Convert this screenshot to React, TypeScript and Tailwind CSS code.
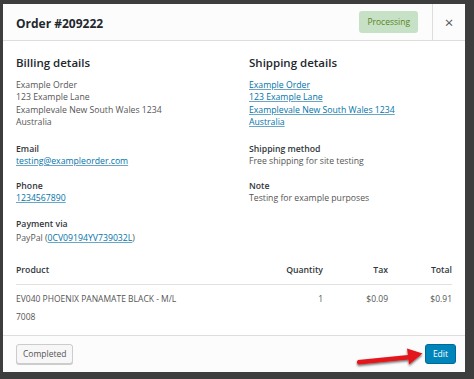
import React from 'react'

const font = { fontFamily: '"Open Sans", "Noto Sans", sans-serif' }

type Line = { readonly text: string; readonly link?: boolean }

const Label = ({ children }: { children: React.ReactNode }): JSX.Element => (
  <div className="text-[8.7px] leading-[12px] font-semibold text-[#32373c]">{children}</div>
)

const Value = ({ children }: { children: React.ReactNode }): JSX.Element => (
  <div className="text-[8.7px] leading-[12px] text-[#555]">{children}</div>
)

const Link = ({ children }: { children: React.ReactNode }): JSX.Element => (
  <span className="text-[#0073aa] underline decoration-[#6aa6c8] underline-offset-1">{children}</span>
)

const Address = ({ lines }: { lines: ReadonlyArray<Line> }): JSX.Element => (
  <div className="mt-[8px] flex flex-col text-[8.7px] leading-[12.3px] text-[#555]">
    {lines.map(l => (
      <span key={l.text}>{l.link ? <Link>{l.text}</Link> : l.text}</span>
    ))}
  </div>
)

const billing: ReadonlyArray<Line> = [
  { text: 'Example Order' },
  { text: '123 Example Lane' },
  { text: 'Examplevale New South Wales 1234' },
  { text: 'Australia' },
]

const shipping: ReadonlyArray<Line> = billing.map(l => ({ ...l, link: true }))

const Arrow = (): JSX.Element => (
  <svg className="absolute left-[352px] top-[345px]" width="74" height="24" viewBox="0 0 74 24">
    <defs>
      <filter id="sh" x="-20%" y="-50%" width="140%" height="200%">
        <feDropShadow dx="0" dy="1.5" stdDeviation="1" floodColor="#000" floodOpacity="0.6" />
      </filter>
    </defs>
    <path
      d="M6 15 L56 10 L55 3.5 L70.5 8.5 L57 19.5 L56.5 14.5 L6.5 19.5 Q3.5 17.5 6 15 Z"
      fill="#e3141b"
      filter="url(#sh)"
    />
  </svg>
)

export default function App(): JSX.Element {
  return (
    <div className="relative h-[379px] w-[474px] overflow-hidden bg-[#3d3d3d] pl-[3px] pt-[4px]" style={font}>
      <div className="flex h-[368px] w-[462px] flex-col bg-white">
        <div className="flex h-[37px] shrink-0 items-center border-b border-[#dddddd] bg-[#fcfcfc]">
          <h1 className="pl-[13px] pt-[3px] text-[12px] font-bold text-[#23282d]">Order #209222</h1>
          <span className="ml-auto mr-[14px] rounded-[3px] bg-[#c6e1c6] px-[8px] py-[5px] text-[8.5px] leading-[12px] text-[#5b841b]">
            Processing
          </span>
          <div className="flex h-full w-[33px] items-center justify-center border-l border-[#dddddd] text-[15px] text-[#555]">
            ×
          </div>
        </div>

        <div className="grid grid-cols-[233px_1fr] px-[13px] pt-[13px]">
          <div className="flex flex-col">
            <h2 className="text-[11.5px] leading-[17px] font-semibold text-[#23282d]">Billing details</h2>
            <Address lines={billing} />
            <div className="mt-[15px]">
              <Label>Email</Label>
              <Value>
                <Link>testing@exampleorder.com</Link>
              </Value>
            </div>
            <div className="mt-[13px]">
              <Label>Phone</Label>
              <Value>
                <Link>1234567890</Link>
              </Value>
            </div>
            <div className="mt-[14px]">
              <Label>Payment via</Label>
              <div className="mt-[2px]">
                <Value>
                  PayPal (<Link>0CV09194YV739032L</Link>)
                </Value>
              </div>
            </div>
          </div>
          <div className="flex flex-col">
            <h2 className="text-[11.5px] leading-[17px] font-semibold text-[#23282d]">Shipping details</h2>
            <Address lines={shipping} />
            <div className="mt-[15px]">
              <Label>Shipping method</Label>
              <Value>Free shipping for site testing</Value>
            </div>
            <div className="mt-[13px]">
              <Label>Note</Label>
              <Value>Testing for example purposes</Value>
            </div>
          </div>
        </div>

        <div className="mt-[20px] px-[13px]">
          <div className="grid grid-cols-[1fr_65px_65px_64px] border-b border-[#e1e1e1] pb-[8px] text-[8.7px] leading-[12px] font-semibold text-[#32373c]">
            <span>Product</span>
            <span className="text-right">Quantity</span>
            <span className="text-right">Tax</span>
            <span className="text-right">Total</span>
          </div>
          <div className="grid grid-cols-[1fr_65px_65px_64px] pt-[8px] text-[8.5px] leading-[12px] text-[#555]">
            <span>EV040 PHOENIX PANAMATE BLACK - M/L</span>
            <span className="text-right">1</span>
            <span className="text-right">$0.09</span>
            <span className="text-right">$0.91</span>
          </div>
          <div className="mt-[6px] text-[8.5px] leading-[12px] text-[#555]">7008</div>
        </div>

        <div className="mt-auto flex h-[37px] shrink-0 items-center justify-between border-t border-[#dddddd] bg-[#fcfcfc] pl-[13px] pr-[9px]">
          <button className="h-[20px] rounded-[3px] border border-[#cccccc] bg-[#f7f7f7] px-[6px] text-[8.5px] text-[#555] shadow-[0_1px_0_#ccc]">
            Completed
          </button>
          <button className="h-[20px] rounded-[3px] border border-[#006799] bg-[#0085ba] px-[7px] text-[8.5px] text-white">
            Edit
          </button>
        </div>
      </div>
      <Arrow />
    </div>
  )
}
